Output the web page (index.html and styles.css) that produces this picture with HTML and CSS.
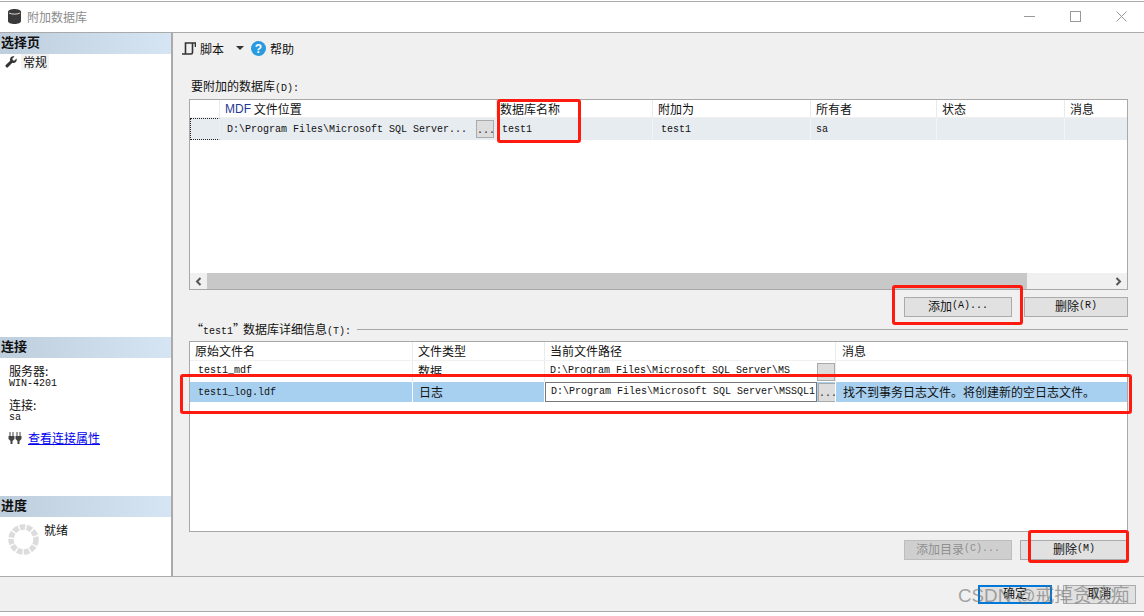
FILE: index.html
```html
<!DOCTYPE html>
<html lang="zh">
<head>
<meta charset="utf-8">
<title>附加数据库</title>
<link rel="stylesheet" href="styles.css">
</head>
<body>
<div class="window">
  <header class="titlebar">
    <svg class="db-icon" width="13" height="15" viewBox="0 0 13 15"><path d="M0 3C0 1 3 0 6.500 0S13 1 13 3V12C13 14 10 15 6.500 15S0 14 0 12Z" fill="#3a3a3a"/><path d="M1 4C3 5.500 10 5.500 12 4" fill="none" stroke="#fff" stroke-width=".8"/></svg>
    <span class="title">附加数据库</span>
    <div class="controls">
      <svg width="11" height="11" viewBox="0 0 11 11"><path d="M0 5.500H11" stroke="#999"/></svg>
      <svg width="11" height="11" viewBox="0 0 11 11"><rect x=".5" y=".5" width="10" height="10" fill="none" stroke="#999"/></svg>
      <svg width="11" height="11" viewBox="0 0 11 11"><path d="M.5 .5L10.500 10.500M10.500 .5L.5 10.500" stroke="#999"/></svg>
    </div>
  </header>
  <div class="body">
    <aside class="sidebar">
      <section class="side-pages">
        <h2 class="side-head">选择页</h2>
        <div class="page-item">
          <svg width="12" height="12" viewBox="0 0 12 12"><path d="M11.500 2.500L9 5 7 3 9.500 .5C7.500-.3 5 1 5 3.500c0 .5 0 .8.2 1.200L.5 9.300c-.7.7 1.500 2.900 2.200 2.200L7.300 6.800C10 7.800 12.500 5 11.500 2.500Z" fill="#333"/></svg>
          <span class="page-name">常规</span>
        </div>
      </section>
      <section class="side-conn">
        <h2 class="side-head">连接</h2>
        <div class="conn-body">
          <div class="conn-label">服务器:</div>
          <div class="mono conn-value">WIN-4201</div>
          <div class="conn-label conn-gap">连接:</div>
          <div class="mono conn-value">sa</div>
          <div class="conn-link">
            <svg width="14" height="12" viewBox="0 0 14 12"><path d="M2 0V4M5 0V4M9 0V4M12 0V4" stroke="#444"/><path d="M.5 4H6.500V7L4.500 9V12H2.500V9L.5 7ZM7.500 4H13.500V7L11.500 9V12H9.500V9L7.500 7Z" fill="#444"/></svg>
            <a class="link" href="#">查看连接属性</a>
          </div>
        </div>
      </section>
      <section class="side-progress">
        <h2 class="side-head">进度</h2>
        <div class="progress-body">
          <svg width="31" height="31" viewBox="0 0 31 31"><circle cx="15.500" cy="15.500" r="12.500" fill="none" stroke="#dcdcdc" stroke-width="5.500" stroke-dasharray="5.500 1.350"/></svg>
          <span class="ready">就绪</span>
        </div>
      </section>
    </aside>
    <main class="main">
      <div class="toolbar">
        <svg width="14" height="13" viewBox="0 0 14 13"><path d="M3.500 12V1H13.500V5M10.500 1V10.500C10.500 11.500 10 12 9 12H0" fill="none" stroke="#333" stroke-width="1.600"/></svg>
        <span class="tool-text">脚本</span>
        <svg class="caret" width="8" height="4" viewBox="0 0 8 4"><path d="M0 0H8L4 4Z" fill="#333"/></svg>
        <svg class="help" width="15" height="15" viewBox="0 0 15 15"><circle cx="7.500" cy="7.500" r="7.500" fill="#2a9ae0"/><text x="7.500" y="11.500" text-anchor="middle" class="help-q">?</text></svg>
        <span class="tool-text">帮助</span>
      </div>
      <div class="section-label">要附加的数据库<span class="mono">(D):</span></div>
      <div class="grid grid-top">
        <div class="row head cols-top">
          <div class="cell"></div>
          <div class="cell"><span class="latin">MDF</span> 文件位置</div>
          <div class="cell tight">数据库名称</div>
          <div class="cell">附加为</div>
          <div class="cell">所有者</div>
          <div class="cell">状态</div>
          <div class="cell">消息</div>
        </div>
        <div class="row data cols-top">
          <div class="cell focus"></div>
          <div class="cell between pad7"><span class="mono">D:\Program Files\Microsoft SQL Server...</span><span class="dots">...</span></div>
          <div class="cell mono">test1</div>
          <div class="cell mono pad8">test1</div>
          <div class="cell mono">sa</div>
          <div class="cell"></div>
          <div class="cell"></div>
        </div>
        <div class="hscroll">
          <span class="arrow">
            <svg width="7" height="9" viewBox="0 0 7 9"><path d="M5.500 1L2 4.500 5.500 8" fill="none" stroke="#555" stroke-width="2"/></svg>
          </span>
          <span class="thumb"></span>
          <span class="arrow">
            <svg width="7" height="9" viewBox="0 0 7 9"><path d="M1.500 1L5 4.500 1.500 8" fill="none" stroke="#555" stroke-width="2"/></svg>
          </span>
        </div>
      </div>
      <div class="buttons buttons-top">
        <button class="btn wide">添加<span class="mono">(A)...</span></button>
        <button class="btn narrow">删除<span class="mono">(R)</span></button>
      </div>
      <div class="group-label">
        <span class="group-text">“<span class="mono">test1</span><span class="close-q">”</span>数据库详细信息<span class="mono">(T):</span></span>
        <span class="rule"></span>
      </div>
      <div class="grid grid-bottom">
        <div class="row head cols-bottom">
          <div class="cell">原始文件名</div>
          <div class="cell">文件类型</div>
          <div class="cell">当前文件路径</div>
          <div class="cell pad6">消息</div>
        </div>
        <div class="row plain cols-bottom">
          <div class="cell indent"><span class="clip mono">test1_mdf</span></div>
          <div class="cell"><span class="clip">数据</span></div>
          <div class="cell between flush"><span class="clip mono">D:\Program Files\Microsoft SQL Server\MS</span><span class="dots blank"></span></div>
          <div class="cell"></div>
        </div>
        <div class="row selected cols-bottom">
          <div class="cell indent mono">test1_log.ldf</div>
          <div class="cell cjk pad6">日志</div>
          <div class="cell editor"><span class="path mono">D:\Program Files\Microsoft SQL Server\MSSQL1</span><span class="dots">...</span></div>
          <div class="cell cjk pad7">找不到事务日志文件。将创建新的空日志文件。</div>
        </div>
      </div>
      <div class="buttons buttons-bottom">
        <button class="btn wide disabled">添加目录<span class="mono">(C)...</span></button>
        <button class="btn wider">删除<span class="mono">(M)</span></button>
      </div>
    </main>
  </div>
  <footer class="footer">
    <button class="btn ok">确定</button>
    <button class="btn cancel">取消</button>
  </footer>
  <div class="mark mark-name"></div>
  <div class="mark mark-add"></div>
  <div class="mark mark-row"></div>
  <div class="mark mark-del"></div>
  <div class="watermark">CSDN @戒掉贪嗔痴</div>
</div>
</body>
</html>
```
FILE: styles.css
```css
* { box-sizing: border-box; }
html, body { margin: 0; padding: 0; background: #fff; }
body {
  font-family: "Noto Sans CJK SC", "Liberation Sans", sans-serif;
  font-size: 12px;
  color: #111;
}
.window {
  position: relative;
  width: 1144px;
  height: 616px;
  overflow: hidden;
  padding-top: 1px;
}
.mono {
  font-family: "Liberation Mono", "Noto Sans CJK SC", monospace;
  font-size: 10px;
}
.latin { font-family: "Liberation Sans", sans-serif; color: #1f3a93; }

.titlebar {
  height: 32px;
  border-top: 1px solid #aaa;
  border-bottom: 1px solid #aaa;
  display: flex;
  align-items: center;
  padding: 0 0 2px 8px;
  background: #fff;
}
.title { margin-left: 6px; color: #8c8c8c; font-size: 12px; }
.controls { margin-left: auto; display: flex; gap: 35px; padding-right: 17px; }
.controls svg { display: block; }

.body { display: flex; height: 543px; }
.sidebar {
  width: 173px;
  flex: none;
  border-right: 2px solid #aaa;
  background: #fff;
  display: flex;
  flex-direction: column;
}
.side-pages { height: 304px; }
.side-conn { height: 159px; }
.side-progress { height: 80px; }
.side-head {
  margin: 0;
  height: 21px;
  line-height: 18px;
  padding-left: 1px;
  font-size: 13px;
  font-weight: 700;
  background: linear-gradient(90deg, #bfcedc, #d6e5f3);
}
.page-item { display: flex; align-items: center; gap: 5px; padding-left: 5px; height: 16px; }
.page-name { background: #f2f2f2; padding: 0 2px; line-height: 16px; margin-left: -1px; }
.conn-body { padding: 6px 0 0 9px; }
.conn-label { line-height: 14px; }
.conn-value { line-height: 11px; }
.conn-gap { margin-top: 9px; }
.conn-link { display: flex; align-items: center; gap: 6px; margin: 6px 0 0 -1px; line-height: 18px; }
.link { color: #0000ee; text-decoration: underline; }
.progress-body { display: flex; gap: 5px; padding: 7px 0 0 8px; line-height: 14px; }
.progress-body svg { display: block; }
.ready { margin-top: -1px; }

.main {
  flex: 1;
  background: #f0f0f0;
  padding: 0 16px;
  min-width: 0;
}
.toolbar { height: 30px; display: flex; align-items: center; margin: 0 0 2px -7px; }
.tool-text { margin-left: 4px; }
.caret { margin: 0 8px 0 12px; }
.help { margin-left: -1px; }
.help-q { font: 700 12px "Liberation Sans", sans-serif; fill: #fff; }
.section-label { height: 34px; padding: 12px 0 0 2px; line-height: 18px; }

.grid { background: #fff; border: 1px solid #a8a8a8; width: 939px; height: 191px; display: flex; flex-direction: column; }
.row { display: grid; }
.cols-top { grid-template-columns: 30px 277px 156px 158px 126px 128px 1fr; }
.cols-bottom { grid-template-columns: 223px 132px 291px 1fr; }
.cell {
  padding-left: 5px;
  border-right: 1px solid #eaeaea;
  white-space: nowrap;
  overflow: hidden;
  display: flex;
  align-items: center;
  gap: 0;
}
.cell:last-child { border-right: 0; }
.head { height: 18px; line-height: 18px; border-bottom: 1px solid #f0f0f0; }
.head .cell { white-space: pre; }
.head .tight { padding-left: 3px; }
.grid-bottom .head { height: 19px; }
.data { height: 22px; background: #e7ecf1; }
.data .cell { border-right-color: #f2f4f6; }
.focus { border: 1px dotted #222; margin-right: 0; }
.between { justify-content: space-between; padding-right: 2px; }
.flush { padding-right: 0; }
.pad6 { padding-left: 6px; }
.pad7 { padding-left: 7px; }
.pad8 { padding-left: 8px; }
.dots {
  flex: none;
  width: 18px;
  height: 18px;
  border: 1px solid #aaa;
  background: #ddd;
  font-family: "Liberation Mono", monospace;
  font-size: 10px;
  line-height: 20px;
  text-align: center;
  color: #222;
}
.hscroll { margin-top: auto; height: 16px; display: flex; background: #f0f0f0; }
.arrow { width: 17px; flex: none; display: flex; align-items: center; justify-content: center; }
.thumb { width: 820px; background: #c8c8c8; margin-right: auto; }

.buttons { display: flex; justify-content: flex-end; }
.buttons-top { margin-top: 7px; gap: 12px; width: 939px; }
.buttons-bottom { margin-top: 8px; gap: 8px; width: 939px; }
.btn {
  height: 20px;
  padding: 0 0 2px;
  border: 1px solid #ababab;
  background: #e1e1e1;
  color: #111;
  font: inherit;
  line-height: 16px;
  display: flex;
  align-items: center;
  justify-content: center;
}
.wide { width: 108px; }
.narrow { width: 104px; }
.wider { width: 108px; }
.disabled { background: #cfcfcf; border-color: #bdbdbd; color: #8f8f8f; }
.group-label { display: flex; align-items: center; gap: 6px; height: 18px; margin: 3px 0 3px 2px; width: 937px; }
.group-text { padding-bottom: 2px; }
.close-q { margin-right: -2px; }
.rule { flex: 1; height: 1px; background: #a8a8a8; }

.indent { padding-left: 8px; }
.plain { height: 21px; }
.clip { display: block; height: 14px; line-height: 19px; overflow: hidden; align-self: flex-start; }
.selected { height: 20px; background: #a6cff0; }
.selected .cell { border-right-color: #fff; }
.selected .cjk { padding-bottom: 2px; }
.plain .cell:last-child, .selected .cell:last-child { border-right: 0; }
.editor { padding: 0; }
.path {
  flex: none;
  width: 272px;
  height: 20px;
  line-height: 17px;
  padding-left: 5px;
  background: #fff;
  border: 1px solid #777;
  overflow: hidden;
}
.editor .dots { margin-left: 1px; height: 19px; }

.footer {
  height: 36px;
  background: #f0f0f0;
  border-top: 1px solid #aaa;
  border-bottom: 1px solid #aaa;
  display: flex;
  justify-content: flex-end;
  align-items: center;
  gap: 11px;
  padding-right: 8px;
}
.ok { width: 74px; height: 19px; border: 2px solid #0078d7; }
.cancel { width: 73px; height: 19px; }

.mark { position: absolute; border: 3px solid #ff1a10; border-radius: 3px; }
.mark-name { left: 497px; top: 99px; width: 84px; height: 44px; }
.mark-add { left: 892px; top: 285px; width: 131px; height: 40px; }
.mark-row { left: 180px; top: 374px; width: 952px; height: 40px; }
.mark-del { left: 1028px; top: 530px; width: 101px; height: 33px; }
.watermark {
  position: absolute;
  left: 958px;
  top: 582px;
  font-size: 18.800px;
  line-height: 28px;
  white-space: nowrap;
  color: rgba(110, 110, 110, .6);
  font-family: "Liberation Sans", "Noto Sans CJK SC", sans-serif;
}
```
